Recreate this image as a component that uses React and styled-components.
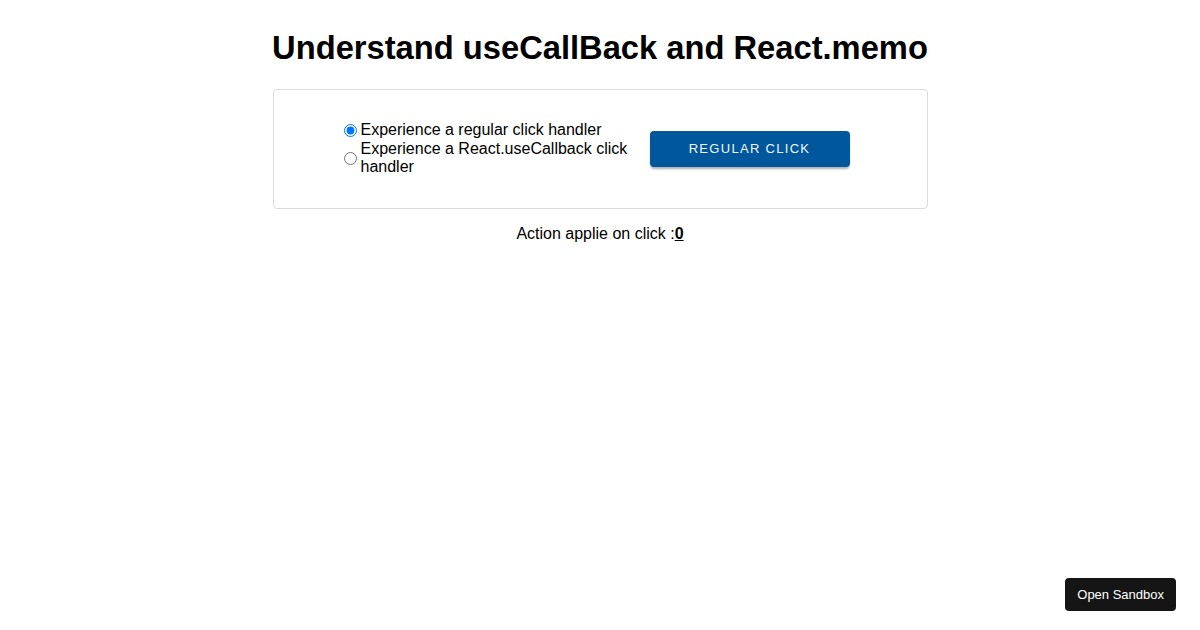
import React, { useState, useCallback } from "react";
import styled, { createGlobalStyle } from "styled-components";

const GlobalStyle = createGlobalStyle`
  html, body {
    margin: 0;
    padding: 0;
    background: #ffffff;
  }
  body {
    font-family: "Liberation Sans", Arial, sans-serif;
    color: #000;
  }
`;

const Page = styled.div`
  display: flex;
  flex-direction: column;
  align-items: center;
  padding-top: 29px;
  min-height: 630px;
  box-sizing: border-box;
`;

const Title = styled.h1`
  margin: 0 0 23px;
  font-size: 32.7px;
  font-weight: 700;
  line-height: 37px;
  text-align: center;
`;

const Card = styled.div`
  width: 655px;
  box-sizing: border-box;
  border: 1px solid #dcdcdc;
  border-radius: 4px;
  padding: 31px 7px 31px 0;
  display: flex;
  justify-content: center;
  align-items: center;
  gap: 16px;
`;

const Options = styled.div`
  display: flex;
  flex-direction: column;
  width: 290px;
`;

const Option = styled.label`
  display: flex;
  align-items: center;
  font-size: 16px;
  line-height: 18.5px;
  cursor: pointer;

  input {
    margin: 0 4px 0 0;
    width: 13px;
    height: 13px;
    flex-shrink: 0;
  }
`;

const ActionButton = styled.button`
  width: 200px;
  height: 36px;
  border: none;
  border-radius: 4px;
  background: #01579b;
  color: #f2f6fa;
  font-family: "Liberation Sans", Arial, sans-serif;
  font-size: 13px;
  letter-spacing: 1.3px;
  text-transform: uppercase;
  box-shadow: 0 3px 2px -1px rgba(0, 0, 0, 0.2), 0 2px 3px 0 rgba(0, 0, 0, 0.14);
  cursor: pointer;
`;

const Counter = styled.p`
  margin: 16px 0 0;
  font-size: 16px;
  line-height: 18px;

  b {
    text-decoration: underline;
  }
`;

const SandboxLink = styled.a`
  position: fixed;
  right: 24px;
  bottom: 19px;
  padding: 0 12px;
  height: 33px;
  display: flex;
  align-items: center;
  background: #151515;
  color: #fff;
  border-radius: 4px;
  font-family: "Liberation Sans", Arial, sans-serif;
  font-size: 13px;
  text-decoration: none;
`;

const App = () => {
  const [mode, setMode] = useState("regular");
  const [count, setCount] = useState(0);

  const memoClick = useCallback(() => setCount((c) => c + 1), []);
  const regularClick = () => setCount((c) => c + 1);

  return (
    <>
      <GlobalStyle />
      <Page>
        <Title>Understand useCallBack and React.memo</Title>
        <Card>
          <Options>
            <Option>
              <input
                type="radio"
                name="mode"
                checked={mode === "regular"}
                onChange={() => setMode("regular")}
              />
              Experience a regular click handler
            </Option>
            <Option>
              <input
                type="radio"
                name="mode"
                checked={mode === "callback"}
                onChange={() => setMode("callback")}
              />
              Experience a React.useCallback click handler
            </Option>
          </Options>
          <ActionButton onClick={mode === "regular" ? regularClick : memoClick}>
            {mode === "regular" ? "Regular click" : "Callback click"}
          </ActionButton>
        </Card>
        <Counter>
          Action applie on click :<b>{count}</b>
        </Counter>
      </Page>
      <SandboxLink href="#">Open Sandbox</SandboxLink>
    </>
  );
};

export default App;
